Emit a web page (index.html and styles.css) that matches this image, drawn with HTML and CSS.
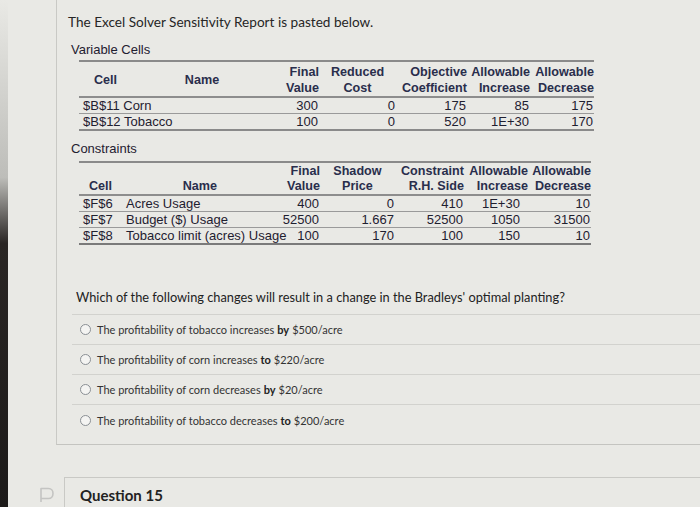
FILE: index.html
```html
<!DOCTYPE html>
<html lang="en">

<head>
    <meta charset="UTF-8">
    <title>Question 14</title>
    <link rel="stylesheet" href="styles.css">
</head>

<body>
    <div class="bezel"></div>
    <div class="page">
        <div class="question">
            <p class="intro">The Excel Solver Sensitivity Report is pasted below.</p>
            <div class="report">
                <p class="section">Variable Cells</p>
                <table class="sens vars">
                    <colgroup>
                        <col style="width:53px"><col style="width:140px"><col style="width:47px"><col style="width:77px">
                        <col style="width:71px"><col style="width:63px"><col style="width:64px">
                    </colgroup>
                    <thead>
                        <tr>
                            <th class="c">Cell</th>
                            <th class="c">Name</th>
                            <th>Final<br>Value</th>
                            <th class="c">Reduced<br>Cost</th>
                            <th>Objective<br>Coefficient</th>
                            <th>Allowable<br>Increase</th>
                            <th>Allowable<br>Decrease</th>
                        </tr>
                    </thead>
                    <tbody>
                        <tr><td colspan="2" class="l">$B$11 Corn</td><td>300</td><td>0</td><td>175</td><td>85</td><td>175</td></tr>
                        <tr><td colspan="2" class="l">$B$12 Tobacco</td><td>100</td><td>0</td><td>520</td><td>1E+30</td><td>170</td></tr>
                    </tbody>
                </table>

                <p class="section">Constraints</p>
                <table class="sens cons">
                    <colgroup>
                        <col style="width:43px"><col style="width:155px"><col style="width:42px"><col style="width:75px">
                        <col style="width:69px"><col style="width:64px"><col style="width:63px">
                    </colgroup>
                    <thead>
                        <tr>
                            <th class="c">Cell</th>
                            <th class="c">Name</th>
                            <th>Final<br>Value</th>
                            <th class="c">Shadow<br>Price</th>
                            <th>Constraint<br>R.H. Side</th>
                            <th>Allowable<br>Increase</th>
                            <th>Allowable<br>Decrease</th>
                        </tr>
                    </thead>
                    <tbody>
                        <tr><td class="l">$F$6</td><td class="l">Acres Usage</td><td>400</td><td>0</td><td>410</td><td class="mid">1E+30</td><td>10</td></tr>
                        <tr><td class="l">$F$7</td><td class="l">Budget ($) Usage</td><td>52500</td><td>1.667</td><td>52500</td><td class="mid">1050</td><td>31500</td></tr>
                        <tr><td class="l">$F$8</td><td class="l" colspan="2">Tobacco limit (acres) Usage&nbsp;&nbsp;&nbsp;100</td><td>170</td><td>100</td><td class="mid">150</td><td>10</td></tr>
                    </tbody>
                </table>
            </div>

            <p class="prompt">Which of the following changes will result in a change in the Bradleys' optimal planting?</p>

            <ul class="answers">
                <li><span class="radio"></span>The profitability of tobacco increases <b>by</b> $500/acre</li>
                <li><span class="radio"></span>The profitability of corn increases <b>to</b> $220/acre</li>
                <li><span class="radio"></span>The profitability of corn decreases <b>by</b> $20/acre</li>
                <li><span class="radio"></span>The profitability of tobacco decreases <b>to</b> $200/acre</li>
            </ul>
        </div>

        <div class="next">
            <svg class="flag" width="16" height="16" viewBox="0 0 16 16">
                <path d="M2 15V1.5h7.5c3 0 4.5 2.5 4.5 5s-1.5 5-4.5 5H2" fill="none" stroke="#c4c4c2" stroke-width="1.6" stroke-linejoin="round"/>
            </svg>
            <div class="next-card">Question 15</div>
        </div>
    </div>
</body>

</html>
```

FILE: styles.css
```css
* {
    margin: 0;
    padding: 0;
    box-sizing: border-box;
}

body {
    width: 700px;
    height: 507px;
    overflow: hidden;
    background: #e9e9e5;
    display: flex;
    font-family: Lato, "Noto Sans", sans-serif;
    color: #2a2a2a;
}

.bezel {
    width: 8px;
    flex: none;
    background: linear-gradient(to bottom, #e9e9e5 0, #bdbdb9 35%, #2a2624 48%, #1c1a19 100%);
}

.page {
    flex: 1;
    padding-left: 48px;
}

.question {
    height: 445px;
    border-left: 1px solid #c9c9c5;
    border-bottom: 1px solid #c4c4c0;
    padding: 12px 0 0 11px;
}

.intro {
    font-size: 13.6px;
    line-height: 20px;
    color: #262626;
}

.report {
    font-family: "Liberation Sans", Arial, sans-serif;
    color: #1f2030;
    padding-top: 9px;
}

.section {
    font-size: 13px;
    line-height: 18px;
    padding-left: 3px;
}

.sens {
    border-collapse: collapse;
    table-layout: fixed;
    margin-left: 11px;
    font-size: 13px;
    line-height: 16px;
    border-top: 2px solid #8a8a8a;
}

.sens th {
    font-size: 12.6px;
    font-weight: bold;
    color: #2a2e4c;
    text-align: right;
    white-space: nowrap;
    padding-top: 2px;
    border-bottom: 2px solid #8d8d8d;
}

.sens th.c {
    text-align: center;
}

.sens td {
    text-align: right;
    white-space: nowrap;
    padding: 0 1px 0 0;
    line-height: 15px;
    border-bottom: 1.5px solid #9a9a9a;
}

.sens td.l {
    text-align: left;
    padding-left: 4px;
}

.sens td.mid {
    padding-right: 8px;
}

.vars {
    margin-top: 1px;
    margin-bottom: 9px;
}

.vars tbody tr:last-child td {
    border-bottom: 2px solid #8a8a8a;
}

.cons {
    margin-top: 3px;
}

.cons th {
    vertical-align: bottom;
    line-height: 15px;
    padding-top: 1px;
}

.cons tbody tr:last-child td {
    border-bottom: 2px solid #7a7a7a;
}

.prompt {
    font-size: 12.8px;
    line-height: 18px;
    margin: 43px 0 0 8px;
    color: #222;
}

.answers {
    list-style: none;
    margin: 8px 0 0 4px;
    border-top: 1px solid #d2d2ce;
}

.answers li {
    display: flex;
    align-items: center;
    height: 30px;
    padding-left: 8px;
    font-size: 11px;
    color: #333;
    border-bottom: 1px solid #d2d2ce;
}

.answers li:last-child {
    border-bottom: none;
}

.answers b {
    color: #222;
    margin: 0 3px;
}

.radio {
    width: 11px;
    height: 11px;
    border: 1px solid #8a8f94;
    border-radius: 50%;
    background: #f4f4f2;
    margin-right: 6px;
    flex: none;
}

.next {
    display: flex;
    align-items: flex-end;
    margin-top: 32px;
    margin-left: -17px;
}

.flag {
    margin: 0 9px 4px 0;
}

.next-card {
    flex: 1;
    height: 30px;
    border-left: 1px solid #c9c9c5;
    border-top: 1px solid #c9c9c5;
    padding: 8px 0 0 15px;
    font-size: 15px;
    font-weight: bold;
    color: #222;
}
```
